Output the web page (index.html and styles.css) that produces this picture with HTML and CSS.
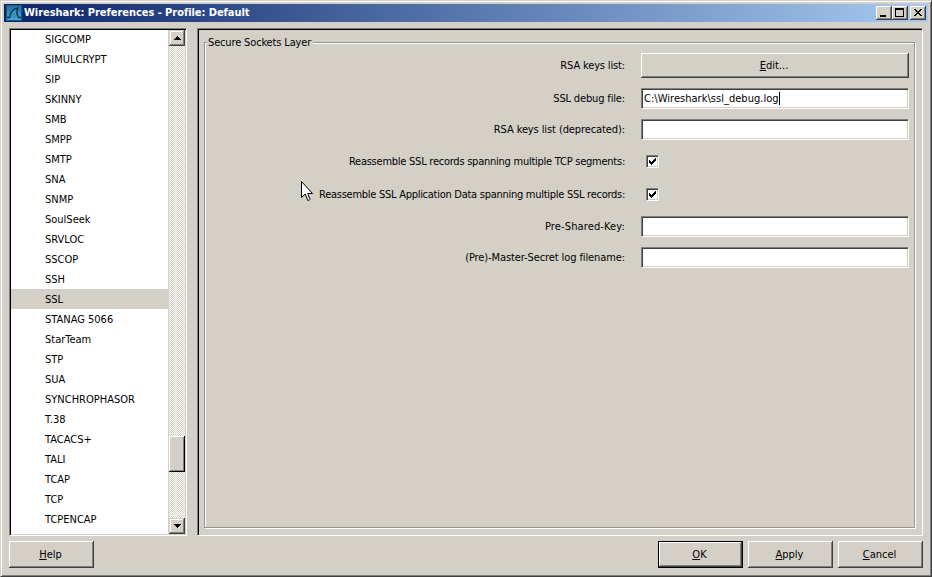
FILE: index.html
```html
<!DOCTYPE html>
<html lang="en">
<head>
<meta charset="utf-8">
<title>Wireshark: Preferences - Profile: Default</title>
<link rel="stylesheet" href="styles.css">
</head>
<body>
<div class="window">
  <header class="titlebar">
    <svg class="app-icon" width="16" height="16" viewBox="0 0 16 16"><defs><linearGradient id="sea" x2="0" y2="1"><stop stop-color="#2b6f98"/><stop offset="1" stop-color="#46a8d4"/></linearGradient></defs><rect width="16" height="16" fill="#17597f"/><rect x="1" y="1" width="14" height="14" fill="url(#sea)"/><path d="M1 12.500H3.500C4.500 7 7 3.500 12 3C10.500 6 11 10 12.500 12.500H15" fill="#3592bf" stroke="#0a3352" stroke-width="1.300"/></svg>
    <h1>Wireshark: Preferences - Profile: Default</h1>
    <div class="controls">
      <button class="ctl"><svg width="16" height="14" shape-rendering="crispEdges"><path d="M4 9h6v2H4z"/></svg></button>
      <button class="ctl"><svg width="16" height="14" shape-rendering="crispEdges"><path fill-rule="evenodd" d="M3 2h9v9H3zM4 4v6h7V4z"/></svg></button>
      <button class="ctl close"><svg width="16" height="14" shape-rendering="crispEdges"><path d="M4 3h2v1h1v1h2V4h1V3h2v1h-1v1h-1v1H9v1h1v1h1v1h1v1h-2V9H9V8H7v1H6v1H4V9h1V8h1V7h1V6H6V5H5V4H4z"/></svg></button>
    </div>
  </header>
  <main class="content">
    <nav class="tree">
      <ul>
        <li><span>SIGCOMP</span></li><li><span>SIMULCRYPT</span></li><li><span>SIP</span></li><li><span>SKINNY</span></li><li><span>SMB</span></li>
        <li><span>SMPP</span></li><li><span>SMTP</span></li><li><span>SNA</span></li><li><span>SNMP</span></li><li><span>SoulSeek</span></li>
        <li><span>SRVLOC</span></li><li><span>SSCOP</span></li><li><span>SSH</span></li><li class="selected"><span>SSL</span></li><li><span>STANAG 5066</span></li>
        <li><span>StarTeam</span></li><li><span>STP</span></li><li><span>SUA</span></li><li><span>SYNCHROPHASOR</span></li><li><span>T.38</span></li>
        <li><span>TACACS+</span></li><li><span>TALI</span></li><li><span>TCAP</span></li><li><span>TCP</span></li><li><span>TCPENCAP</span></li>
      </ul>
      <div class="scrollbar">
        <div class="arrow"><svg width="7" height="4" shape-rendering="crispEdges"><path d="M3 0h1v1h1v1h1v1h1v1H0V3h1V2h1V1h1z"/></svg></div>
        <div class="track"><div class="thumb"></div></div>
        <div class="arrow"><svg width="7" height="4" shape-rendering="crispEdges"><path d="M0 0h7v1H6v1H5v1H4v1H3V3H2V2H1V1H0z"/></svg></div>
      </div>
    </nav>
    <section class="pane">
      <fieldset>
        <legend>Secure Sockets Layer</legend>
        <div class="form">
          <label>RSA keys list:</label><button class="btn edit"><span><u>E</u>dit...</span></button>
          <label>SSL debug file:</label><div class="field"><span>C:\Wireshark\ssl_debug.log</span><i class="caret"></i></div>
          <label class="mid">RSA keys list (deprecated):</label><div class="field"></div>
          <label class="long">Reassemble SSL records spanning multiple TCP segments:</label><div class="check"><svg width="9" height="9" shape-rendering="crispEdges"><path d="M1 3h1v1h1v1h1V4h1V3h1V2h1V1h1v3H7v1H6v1H5v1H4v1H3V7H2V6H1z"/></svg></div>
          <label class="longer">Reassemble SSL Application Data spanning multiple SSL records:</label><div class="check"><svg width="9" height="9" shape-rendering="crispEdges"><path d="M1 3h1v1h1v1h1V4h1V3h1V2h1V1h1v3H7v1H6v1H5v1H4v1H3V7H2V6H1z"/></svg></div>
          <label class="wide">Pre-Shared-Key:</label><div class="field"></div>
          <label class="mid">(Pre)-Master-Secret log filename:</label><div class="field"></div>
        </div>
      </fieldset>
    </section>
  </main>
  <footer class="actions">
    <button class="btn"><span><u>H</u>elp</span></button>
    <div class="right">
      <button class="btn default"><span><u>O</u>K</span></button>
      <button class="btn"><span><u>A</u>pply</span></button>
      <button class="btn"><span><u>C</u>ancel</span></button>
    </div>
  </footer>
  <svg class="cursor" width="12" height="21" viewBox="0 0 12 21"><path d="M.5.500V16.500L4.200 13L6.700 19.300Q8 20 9 18.300L6.700 12.500H11.500Z" fill="#fff" stroke="#000"/></svg>
</div>
</body>
</html>
```
FILE: styles.css
```css
* { box-sizing: border-box; }
body { margin: 0; background: #d4d0c8; color: #000; font: 11px/14px "DejaVu Sans Condensed", "DejaVu Sans", sans-serif; font-stretch: condensed; }
.window { position: relative; width: 932px; height: 577px; overflow: hidden; background: #d4d0c8; padding: 2px; border: 1px solid; border-color: #d4d0c8 #404040 #404040 #d4d0c8; box-shadow: inset 1px 1px #fff, inset -1px -1px #808080; display: flex; flex-direction: column; }
.titlebar { height: 18px; margin: 1px 1px 0; display: flex; align-items: center; background: linear-gradient(90deg, #0a246a, #a6caf0); padding: 0 2px; }
.app-icon { flex: none; }
h1 { margin: 0 0 0 2px; color: #fff; font: bold 11px/18px "DejaVu Sans Condensed", sans-serif; font-stretch: condensed; letter-spacing: -0.05px; }
.controls { margin-left: auto; display: flex; }
.ctl { width: 16px; height: 14px; padding: 0; border: 0; background: #d4d0c8; box-shadow: inset -1px -1px #404040, inset 1px 1px #fff, inset -2px -2px #808080; }
.ctl svg { display: block; }
.close { margin-left: 2px; }
.content { display: flex; gap: 10px; height: 508px; margin: 6px 6px 0 6px; }
.tree { width: 178px; display: flex; background: #fff; border: 1px solid; border-color: #808080 #fff #fff #808080; box-shadow: inset 1px 1px #000, inset -1px -1px #d4d0c8; padding: 1px; }
ul { list-style: none; margin: -1px 0 0; padding: 0; width: 157px; }
li { height: 20px; line-height: 21px; padding-left: 34px; white-space: nowrap; }
.selected { background: #d4d0c8; }
.scrollbar { width: 17px; border-left: 1px solid #d4d0c8; display: flex; flex-direction: column; }
.arrow { height: 16px; display: flex; align-items: center; justify-content: center; background: #d4d0c8; box-shadow: inset -1px -1px #404040, inset 1px 1px #d4d0c8, inset -2px -2px #808080, inset 2px 2px #fff; }
.track { flex: 1; background: repeating-conic-gradient(#fff 0 25%, #d4d0c8 0 50%) 0 0 / 2px 2px; padding-top: 390px; }
.thumb { height: 36px; background: #d4d0c8; box-shadow: inset -1px -1px #000, inset 1px 1px #fff, inset -2px -2px #808080; }
.pane { flex: 1; border: 1px solid; border-color: #808080 #fff #fff #808080; box-shadow: inset 1px 1px #000; padding: 6px 7px 7px 6px; }
fieldset { margin: 0; padding: 0; border: 1px solid #989488; box-shadow: inset 1px 1px #fff, 1px 1px #fff; height: 493px; min-width: 0; }
legend { margin-left: 2px; padding: 1px 2px 0 1px; height: 14px; line-height: 14px; letter-spacing: -0.15px; background: #d4d0c8; }
.form { display: grid; grid-template-columns: 420px 268px; column-gap: 16px; grid-template-rows: 25px 41px 21px 43px 23px 41px 21px; align-items: center; padding-top: 4px; }
label { padding-top: 1px; text-align: right; white-space: nowrap; letter-spacing: -0.15px; }
.mid { letter-spacing: -0.1px; }
.long { letter-spacing: -0.245px; }
.longer { letter-spacing: -0.27px; }
.wide { letter-spacing: 0.13px; }
.field { height: 21px; background: #fff; border: 1px solid; border-color: #808080 #fff #fff #808080; box-shadow: inset 1px 1px #404040, inset -1px -1px #d4d0c8; padding: 3px 2px; display: flex; white-space: nowrap; letter-spacing: 0.03px; }
.caret { width: 1px; height: 13px; background: #000; }
.check { margin-left: 5px; width: 13px; height: 13px; background: #fff; border: 1px solid; border-color: #808080 #fff #fff #808080; box-shadow: inset 1px 1px #404040, inset -1px -1px #d4d0c8; padding: 1px; }
.check svg { display: block; }
.btn { font: inherit; width: 85px; height: 27px; padding: 0 2px 0 0; border: 0; color: #000; background: #d4d0c8; box-shadow: inset -1px -1px #404040, inset 1px 1px #fff, inset -2px -2px #808080; }
.edit { width: 268px; height: 25px; }
.default { box-shadow: inset 0 0 0 1px #000, inset -2px -2px #404040, inset 2px 2px #fff, inset -3px -3px #808080; }
.actions { display: flex; justify-content: space-between; margin: 5px 6px 0 6px; }
.right { display: flex; gap: 5px; }
.cursor { position: absolute; left: 300px; top: 180px; }
```
